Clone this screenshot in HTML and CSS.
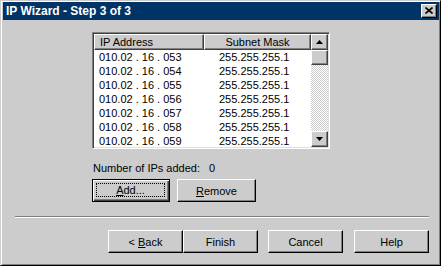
FILE: index.html
```html
<!DOCTYPE html>
<html lang="en">
<head>
    <meta charset="UTF-8">
    <link rel="stylesheet" href="styles.css">
    <title>IP Wizard - Step 3 of 3</title>
</head>
<body>
    <div class="window">
        <div class="titlebar">
            <span class="title">IP Wizard - Step 3 of 3</span>
            <span class="close-btn">
                <svg width="8" height="7" viewBox="0 0 8 7"><path d="M0.5 0.5 L7.5 6.5 M7.5 0.5 L0.5 6.5" stroke="#000" stroke-width="1.6" fill="none"/></svg>
            </span>
        </div>

        <div class="panel">
            <div class="listbox">
                <div class="list">
                    <div class="list-head">
                        <div class="head-cell head-ip">IP Address</div>
                        <div class="head-cell head-mask">Subnet Mask</div>
                    </div>
                    <div class="rows">
                        <div class="row"><span class="ip">010.02 . 16 . 053</span><span class="mask">255.255.255.1</span></div>
                        <div class="row"><span class="ip">010.02 . 16 . 054</span><span class="mask">255.255.255.1</span></div>
                        <div class="row"><span class="ip">010.02 . 16 . 055</span><span class="mask">255.255.255.1</span></div>
                        <div class="row"><span class="ip">010.02 . 16 . 056</span><span class="mask">255.255.255.1</span></div>
                        <div class="row"><span class="ip">010.02 . 16 . 057</span><span class="mask">255.255.255.1</span></div>
                        <div class="row"><span class="ip">010.02 . 16 . 058</span><span class="mask">255.255.255.1</span></div>
                        <div class="row"><span class="ip">010.02 . 16 . 059</span><span class="mask">255.255.255.1</span></div>
                    </div>
                </div>
                <div class="scrollbar">
                    <div class="scroll-btn">
                        <svg width="7" height="4" viewBox="0 0 7 4"><path d="M3.5 0 L7 4 L0 4 Z" fill="#000"/></svg>
                    </div>
                    <div class="scroll-thumb"></div>
                    <div class="scroll-track"></div>
                    <div class="scroll-btn">
                        <svg width="7" height="4" viewBox="0 0 7 4"><path d="M0 0 L7 0 L3.5 4 Z" fill="#000"/></svg>
                    </div>
                </div>
            </div>

            <div class="count">
                <span>Number of IPs added:</span>
                <span class="count-num">0</span>
            </div>

            <div class="actions">
                <div class="btn btn-default"><span class="focus-box"><span><u>A</u>dd...</span></span></div>
                <div class="btn btn-wide"><span><u>R</u>emove</span></div>
            </div>
        </div>

        <div class="separator"></div>

        <div class="footer">
            <div class="btn btn-nav"><span>&lt; <u>B</u>ack</span></div>
            <div class="btn btn-nav"><span>Finish</span></div>
            <div class="btn btn-nav btn-cancel"><span>Cancel</span></div>
            <div class="btn btn-nav btn-help"><span>Help</span></div>
        </div>
    </div>
</body>
</html>
```

FILE: styles.css
```css
*{
    box-sizing: border-box;
}

body{
    margin: 0;
    background-color: #cccccc;
    font-family: "Liberation Sans", Arial, sans-serif;
    font-size: 11px;
    color: #000;
}

u{
    text-decoration-thickness: 1px;
    text-underline-offset: 1px;
}

.window{
    width: 441px;
    height: 266px;
    border: 1px solid;
    border-color: #cccccc #000 #000 #cccccc;
    box-shadow: inset 1px 1px #fff, inset -1px -1px #808080;
    padding: 1px 1px 0 2px;
}

.titlebar{
    height: 18px;
    background-color: #003366;
    color: #fff;
    display: flex;
    align-items: center;
    justify-content: space-between;
    padding: 0 2px 0 3px;
}

.title{
    font-weight: bold;
    font-size: 12px;
}

.close-btn{
    width: 16px;
    height: 14px;
    background-color: #cccccc;
    border: 1px solid;
    border-color: #fff #000 #000 #fff;
    box-shadow: inset -1px -1px #808080;
    display: flex;
    align-items: center;
    justify-content: center;
    padding-right: 1px;
    padding-bottom: 1px;
}

.panel{
    padding: 12px 0 0 89px;
}

.listbox{
    width: 238px;
    height: 117px;
    display: flex;
    border: 1px solid;
    border-color: #808080 #fff #fff #808080;
    box-shadow: inset 1px 1px #404040, inset -1px -1px #dfdfdf;
    padding: 1px;
}

.list{
    width: 217px;
    display: flex;
    flex-direction: column;
}

.list-head{
    display: flex;
    height: 16px;
}

.head-cell{
    height: 16px;
    line-height: 14px;
    border: 1px solid;
    border-color: #fff #404040 #404040 #fff;
    box-shadow: inset -1px -1px #808080;
    background-color: #cccccc;
}

.head-ip{
    width: 110px;
    padding-left: 5px;
}

.head-mask{
    width: 107px;
    text-align: center;
}

.rows{
    flex: 1;
    background-color: #fff;
}

.row{
    display: flex;
    height: 14px;
    line-height: 14px;
    white-space: nowrap;
}

.row:last-child{
    height: 13px;
}

.ip{
    width: 110px;
    padding-left: 5px;
}

.mask{
    padding-left: 15px;
}

.scrollbar{
    width: 17px;
    display: flex;
    flex-direction: column;
}

.scroll-btn, .scroll-thumb{
    height: 16px;
    border: 1px solid;
    border-color: #fff #404040 #404040 #fff;
    box-shadow: inset -1px -1px #808080;
    background-color: #cccccc;
    display: flex;
    align-items: center;
    justify-content: center;
}

.scroll-thumb{
    height: 15px;
}

.scroll-track{
    flex: 1;
    background: repeating-conic-gradient(#fff 0 25%, #cccccc 0 50%) 0 0 / 2px 2px;
}

.count{
    margin-top: 12px;
    line-height: 14px;
    padding-left: 1px;
}

.count-num{
    margin-left: 6px;
}

.actions{
    display: flex;
    gap: 7px;
    margin-top: 4px;
}

.btn{
    height: 23px;
    border: 1px solid;
    border-color: #fff #000 #000 #fff;
    box-shadow: inset -1px -1px #808080;
    background-color: #cccccc;
    display: flex;
    align-items: center;
    justify-content: center;
}

.btn-default{
    width: 78px;
    border-color: #000;
    box-shadow: inset 1px 1px #fff, inset -1px -1px #404040, inset -2px -2px #808080;
    padding: 3px 4px 4px 3px;
}

.focus-box{
    flex: 1;
    align-self: stretch;
    border: 1px dotted #000;
    display: flex;
    align-items: center;
    justify-content: center;
}

.btn-wide{
    width: 79px;
}

.separator{
    margin: 14px 0 0 12px;
    width: 414px;
    height: 2px;
    border-top: 1px solid #808080;
    border-bottom: 1px solid #fff;
}

.footer{
    display: flex;
    margin-top: 12px;
    padding-left: 105px;
}

.btn-nav{
    width: 75px;
}

.btn-cancel{
    margin-left: 10px;
}

.btn-help{
    margin-left: 11px;
}
```
